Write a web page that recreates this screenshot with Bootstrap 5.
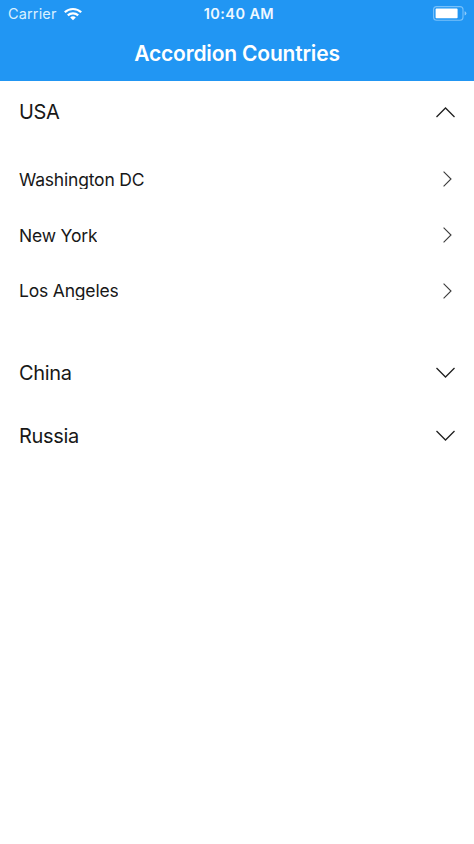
<!DOCTYPE html>
<html lang="en">
<head>
<meta charset="utf-8">
<meta name="viewport" content="width=device-width, initial-scale=1">
<title>Accordion Countries</title>
<link rel="stylesheet" href="https://cdn.jsdelivr.net/npm/bootstrap@5.3.0/dist/css/bootstrap.min.css">
<style>
body { font-family: Inter, "Liberation Sans", sans-serif; color: #181818; }
.app-header { background: #2196f3; height: 81px; }
.status { display: grid; grid-template-columns: 1fr auto 1fr; height: 26px; padding: 0 7px 0 8px; font-size: 14.5px; line-height: 27px; }
.carrier { color: #d9f0ff; letter-spacing: .15px; gap: 7px; }
.clock { font-weight: 600; letter-spacing: .4px; padding-left: 3px; color: #eef8ff; }
.app-title { font-size: 21px; font-weight: 600; line-height: 55px; letter-spacing: -.18px; }
.country { height: 63.5px; padding: 0 19px; font-size: 20px; letter-spacing: -.35px; }
.country.first { height: 62px; }
.country span { padding-top: 1px; }
.country.first span { padding-top: 0; }
.cities { padding: 8.4px 0 21.6px; }
.city { height: 55.8px; padding: 0 22px 0 19px; font-size: 17.5px; letter-spacing: -.19px; }
.city span { line-height: 20px; height: 19px; overflow: hidden; }
svg { display: block; }
svg.line { fill: none; stroke: #202020; stroke-width: 1.3; }
.city svg.line { stroke: #3c3c3c; stroke-width: 1.1; }
</style>
</head>
<body class="bg-white">
<header class="app-header text-white">
  <div class="status align-items-center">
    <div class="carrier d-flex align-items-center">
      <span>Carrier</span>
      <svg width="18" height="14" viewBox="0 0 18 14" fill="none" stroke="#fff" stroke-width="2.2"><path d="M.8 5.3C5.4.9 12.6.9 17.2 5.3M3.8 8.4c2.9-2.8 7.5-2.8 10.4 0"/><path d="M9 13.2 6.2 10.4c1.6-1.4 4-1.4 5.6 0z" fill="#fff" stroke="none"/></svg>
    </div>
    <div class="clock">10:40 AM</div>
    <div class="d-flex justify-content-end">
      <svg width="34" height="15" viewBox="0 0 34 15"><rect x=".6" y=".6" width="29.4" height="13.6" rx="3" fill="none" stroke="#78c1fa" stroke-width="1.1"/><rect x="2.6" y="2.6" width="22" height="9.6" rx=".8" fill="#fff"/><path d="M31.6 5.2q1.8.6 1.8 2.2t-1.8 2.2z" fill="#8ccafb"/></svg>
    </div>
  </div>
  <h1 class="app-title text-center mb-0">Accordion Countries</h1>
</header>
<main>
  <div class="country first d-flex align-items-center justify-content-between"><span>USA</span><svg class="line" width="19" height="11" viewBox="0 0 19 11"><path d="M.5 10 9.5 1l9 9"/></svg></div>
  <div class="cities">
    <div class="city d-flex align-items-center justify-content-between"><span>Washington DC</span><svg class="line" width="9" height="16" viewBox="0 0 9 16"><path d="M.6.6 8 8 .6 15.4"/></svg></div>
    <div class="city d-flex align-items-center justify-content-between"><span>New York</span><svg class="line" width="9" height="16" viewBox="0 0 9 16"><path d="M.6.6 8 8 .6 15.4"/></svg></div>
    <div class="city d-flex align-items-center justify-content-between"><span>Los Angeles</span><svg class="line" width="9" height="16" viewBox="0 0 9 16"><path d="M.6.6 8 8 .6 15.4"/></svg></div>
  </div>
  <div class="country d-flex align-items-center justify-content-between"><span>China</span><svg class="line" width="19" height="11" viewBox="0 0 19 11"><path d="m.5 1 9 9 9-9"/></svg></div>
  <div class="country d-flex align-items-center justify-content-between"><span>Russia</span><svg class="line" width="19" height="11" viewBox="0 0 19 11"><path d="m.5 1 9 9 9-9"/></svg></div>
</main>
<script src="https://cdn.jsdelivr.net/npm/bootstrap@5.3.0/dist/js/bootstrap.bundle.min.js"></script>
</body>
</html>
